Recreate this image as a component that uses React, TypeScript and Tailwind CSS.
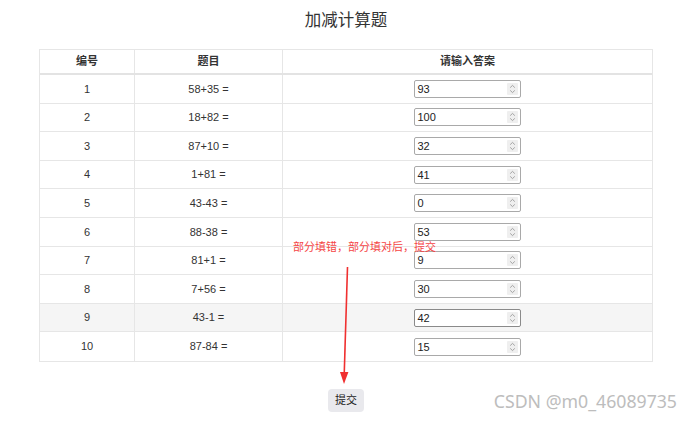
import React from "react";

const rows: [number, string, string][] = [
  [1, "58+35 =", "93"],
  [2, "18+82 =", "100"],
  [3, "87+10 =", "32"],
  [4, "1+81 =", "41"],
  [5, "43-43 =", "0"],
  [6, "88-38 =", "53"],
  [7, "81+1 =", "9"],
  [8, "7+56 =", "30"],
  [9, "43-1 =", "42"],
  [10, "87-84 =", "15"],
];

function NumInput({ value, focused }: { value: string; focused?: boolean }) {
  return (
    <div
      className={`flex items-center justify-between w-[107px] h-[18px] rounded-[2px] border bg-white pl-[3px] pr-[2px] ${
        focused ? "border-[#8a8a8a]" : "border-[#a9a9a9]"
      }`}
    >
      <span className="text-[11px] leading-[14px] text-[#222]">{value}</span>
      <span className="flex items-center justify-center w-[11px] h-[12px] bg-[#efefef] rounded-[1px]">
        <svg width="7" height="10" viewBox="0 0 7 10" fill="none" stroke="#9a9a9a" strokeWidth="0.9">
          <path d="M1.2 3.6 L3.5 1.4 L5.8 3.6" />
          <path d="M1.2 6.4 L3.5 8.6 L5.8 6.4" />
        </svg>
      </span>
    </div>
  );
}

export default function App() {
  return (
    <div
      className="relative w-[692px] h-[422px] bg-white overflow-hidden text-[#333]"
      style={{ fontFamily: '"Liberation Sans", "Noto Sans CJK SC", sans-serif' }}
    >
      <h1 className="text-center text-[16.5px] leading-[20px] pt-[10px] font-normal text-[#333]">加减计算题</h1>

      <div className="mx-auto mt-[19px] w-[614px] border border-[#e6e6e6]">
        <div className="grid grid-cols-[95px_148px_1fr] h-[25px] border-b-2 border-[#e3e3e3] text-[11px] font-bold text-[#333]">
          <div className="flex items-center justify-center border-r border-[#e6e6e6]">编号</div>
          <div className="flex items-center justify-center border-r border-[#e6e6e6]">题目</div>
          <div className="flex items-center justify-center">请输入答案</div>
        </div>
        {rows.map(([n, q, a], i) => (
          <div
            key={n}
            className={`grid grid-cols-[95px_148px_1fr] h-[28.6px] text-[11px] ${
              i < rows.length - 1 ? "border-b border-[#e6e6e6]" : ""
            } ${n === 9 ? "bg-[#f5f5f5]" : "bg-white"}`}
          >
            <div className="flex items-center justify-center border-r border-[#e6e6e6]">{n}</div>
            <div className="flex items-center justify-center border-r border-[#e6e6e6]">{q}</div>
            <div className="flex items-center justify-center pr-[1px]">
              <NumInput value={a} focused={n === 9} />
            </div>
          </div>
        ))}
      </div>

      <div className="flex justify-center mt-[27px]">
        <button className="w-[36px] h-[23px] rounded-[4px] bg-[#e9e9ed] text-[11px] text-[#222] flex items-center justify-center">
          提交
        </button>
      </div>

      <div className="absolute left-[293px] top-[240px] text-[11px] leading-[14px] text-[#f54545]">
        部分填错，部分填对后，提交
      </div>

      <svg className="absolute left-0 top-0 pointer-events-none" width="692" height="422" viewBox="0 0 692 422">
        <line x1="347.5" y1="267" x2="344.2" y2="375" stroke="#f03030" strokeWidth="1.6" />
        <polygon points="340,372 348.4,372 344,384" fill="#f03030" />
      </svg>

      <div
        className="absolute right-[15px] top-[392px] text-[17.7px] leading-[18px] text-[#bdbdbd]"
        style={{ fontFamily: '"Noto Sans", sans-serif' }}
      >
        CSDN @m0_46089735
      </div>
    </div>
  );
}
